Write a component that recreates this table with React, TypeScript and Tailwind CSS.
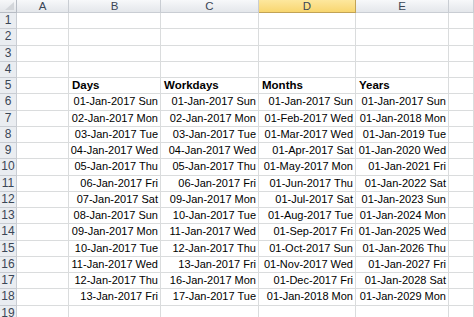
// Excel-style sheet: date series for days, workdays, months and years.

const COLS = ["A", "B", "C", "D", "E", ""];
const WIDTHS = ["w-[52px]", "w-[92px]", "w-[98px]", "w-[97px]", "w-[93px]", "flex-1"];

const HEADINGS = ["Days", "Workdays", "Months", "Years"];

const DATA: string[][] = [
  ["01-Jan-2017 Sun", "01-Jan-2017 Sun", "01-Jan-2017 Sun", "01-Jan-2017 Sun"],
  ["02-Jan-2017 Mon", "02-Jan-2017 Mon", "01-Feb-2017 Wed", "01-Jan-2018 Mon"],
  ["03-Jan-2017 Tue", "03-Jan-2017 Tue", "01-Mar-2017 Wed", "01-Jan-2019 Tue"],
  ["04-Jan-2017 Wed", "04-Jan-2017 Wed", "01-Apr-2017 Sat", "01-Jan-2020 Wed"],
  ["05-Jan-2017 Thu", "05-Jan-2017 Thu", "01-May-2017 Mon", "01-Jan-2021 Fri"],
  ["06-Jan-2017 Fri", "06-Jan-2017 Fri", "01-Jun-2017 Thu", "01-Jan-2022 Sat"],
  ["07-Jan-2017 Sat", "09-Jan-2017 Mon", "01-Jul-2017 Sat", "01-Jan-2023 Sun"],
  ["08-Jan-2017 Sun", "10-Jan-2017 Tue", "01-Aug-2017 Tue", "01-Jan-2024 Mon"],
  ["09-Jan-2017 Mon", "11-Jan-2017 Wed", "01-Sep-2017 Fri", "01-Jan-2025 Wed"],
  ["10-Jan-2017 Tue", "12-Jan-2017 Thu", "01-Oct-2017 Sun", "01-Jan-2026 Thu"],
  ["11-Jan-2017 Wed", "13-Jan-2017 Fri", "01-Nov-2017 Wed", "01-Jan-2027 Fri"],
  ["12-Jan-2017 Thu", "16-Jan-2017 Mon", "01-Dec-2017 Fri", "01-Jan-2028 Sat"],
  ["13-Jan-2017 Fri", "17-Jan-2017 Tue", "01-Jan-2018 Mon", "01-Jan-2029 Mon"],
];

function cellsFor(row: number): { text: string; bold?: boolean }[] {
  if (row === 5) return ["", ...HEADINGS, ""].map((t) => ({ text: t, bold: true }));
  const d = DATA[row - 6];
  if (d) return ["", ...d, ""].map((t) => ({ text: t }));
  return COLS.map(() => ({ text: "" }));
}

function CornerCell() {
  return (
    <div className="relative h-full w-[17px] shrink-0 border-r border-b border-[#b7bcc4] bg-gradient-to-b from-[#f6f7f9] to-[#e3e6ea]">
      <svg width="9" height="8" viewBox="0 0 9 8" className="absolute right-[2px] bottom-[2px]">
        <polygon points="9,0 9,8 0,8" fill="#d3d6da" />
      </svg>
    </div>
  );
}

function ColumnHeader() {
  return (
    <div className="flex h-[13px] text-[11.5px] leading-[12px] text-[#3a4656]">
      <CornerCell />
      {COLS.map((c, i) => (
        <div
          key={i}
          className={
            WIDTHS[i] +
            " shrink-0 border-r border-b text-center " +
            (c === "D"
              ? "border-[#c2a355] bg-gradient-to-b from-[#fde79d] to-[#f8d66f]"
              : "border-[#c9cdd3] bg-gradient-to-b from-[#f7f8fa] to-[#e4e7eb]")
          }
        >
          {c}
        </div>
      ))}
    </div>
  );
}

function SheetRow({ row }: { row: number }) {
  const cells = cellsFor(row);
  return (
    <div className="flex h-[16.25px] shrink-0 text-[11px] leading-[15.5px]">
      <div className="w-[17px] shrink-0 border-r border-b border-[#c9cdd3] bg-[#eaedf1] text-center text-[12px] text-[#3a4656]">
        {row}
      </div>
      {cells.map((c, i) => (
        <div
          key={i}
          className={
            WIDTHS[i] +
            " shrink-0 overflow-hidden whitespace-nowrap border-r border-b border-[#dadcdd] text-black " +
            (c.bold ? "pl-[3px] text-left text-[11.5px] font-bold" : "pr-[2px] text-right")
          }
        >
          {c.text}
        </div>
      ))}
    </div>
  );
}

export default function App() {
  const rows = Array.from({ length: 19 }, (_, i) => i + 1);
  return (
    <div className="flex h-[317px] w-[474px] flex-col overflow-hidden bg-white font-['Liberation_Sans',Arial,sans-serif]">
      <ColumnHeader />
      {rows.map((r) => (
        <SheetRow key={r} row={r} />
      ))}
    </div>
  );
}
